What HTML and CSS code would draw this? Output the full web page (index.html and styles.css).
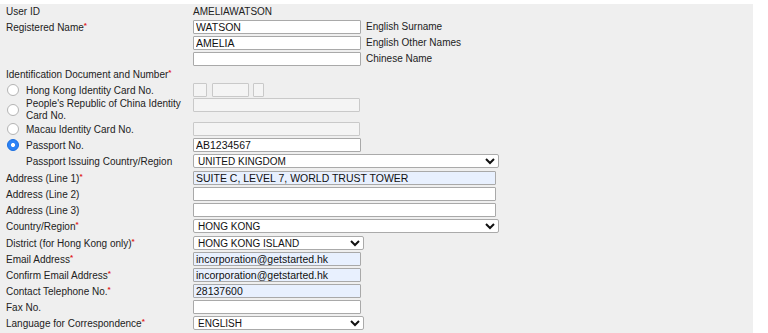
FILE: index.html
```html
<!DOCTYPE html>
<html lang="en">
<head>
    <meta charset="UTF-8">
    <meta name="viewport" content="width=device-width, initial-scale=1.0">
    <title>Applicant Particulars</title>
    <link rel="stylesheet" href="styles.css">
</head>
<body>
    <div class="panel">
        <table class="form">
            <colgroup>
                <col class="col-label">
                <col>
            </colgroup>
            <tr>
                <td class="label">User ID</td>
                <td class="value text">AMELIAWATSON</td>
            </tr>
            <tr>
                <td class="label">Registered Name<span class="req">*</span></td>
                <td class="value"><input class="w168" type="text" value="WATSON"><span class="hint">English Surname</span></td>
            </tr>
            <tr>
                <td class="label"></td>
                <td class="value"><input class="w168" type="text" value="AMELIA"><span class="hint">English Other Names</span></td>
            </tr>
            <tr>
                <td class="label"></td>
                <td class="value"><input class="w168" type="text" value=""><span class="hint">Chinese Name</span></td>
            </tr>
            <tr>
                <td class="label" colspan="2">Identification Document and Number<span class="req">*</span></td>
            </tr>
            <tr>
                <td class="label"><div class="radio-row"><input type="radio" name="doc"><span>Hong Kong Identity Card No.</span></div></td>
                <td class="value">
                    <div class="hkid">
                        <input class="box b1" type="text" disabled>
                        <input class="box b2" type="text" disabled>
                        <input class="box b3" type="text" disabled>
                    </div>
                </td>
            </tr>
            <tr class="tall">
                <td class="label"><div class="radio-row"><input type="radio" name="doc"><span class="two-line">People's Republic of China Identity Card No.</span></div></td>
                <td class="value top"><input class="w167" type="text" disabled></td>
            </tr>
            <tr class="after-tall">
                <td class="label"><div class="radio-row"><input type="radio" name="doc"><span>Macau Identity Card No.</span></div></td>
                <td class="value"><input class="w167" type="text" disabled></td>
            </tr>
            <tr>
                <td class="label"><div class="radio-row"><input type="radio" name="doc" checked><span>Passport No.</span></div></td>
                <td class="value"><input class="w168" type="text" value="AB1234567"></td>
            </tr>
            <tr class="pick">
                <td class="label sub">Passport Issuing Country/Region</td>
                <td class="value"><select class="wide"><option>UNITED KINGDOM</option></select></td>
            </tr>
            <tr>
                <td class="label">Address (Line 1)<span class="req">*</span></td>
                <td class="value"><input class="w303 filled" type="text" value="SUITE C, LEVEL 7, WORLD TRUST TOWER"></td>
            </tr>
            <tr>
                <td class="label">Address (Line 2)</td>
                <td class="value"><input class="w303" type="text" value=""></td>
            </tr>
            <tr>
                <td class="label">Address (Line 3)</td>
                <td class="value"><input class="w303" type="text" value=""></td>
            </tr>
            <tr class="pick">
                <td class="label">Country/Region<span class="req">*</span></td>
                <td class="value"><select class="wide"><option>HONG KONG</option></select></td>
            </tr>
            <tr>
                <td class="label">District (for Hong Kong only)<span class="req">*</span></td>
                <td class="value"><select class="narrow"><option>HONG KONG ISLAND</option></select></td>
            </tr>
            <tr>
                <td class="label">Email Address<span class="req">*</span></td>
                <td class="value"><input class="w168 filled" type="text" value="incorporation@getstarted.hk"></td>
            </tr>
            <tr>
                <td class="label">Confirm Email Address<span class="req">*</span></td>
                <td class="value"><input class="w168 filled" type="text" value="incorporation@getstarted.hk"></td>
            </tr>
            <tr>
                <td class="label">Contact Telephone No.<span class="req">*</span></td>
                <td class="value"><input class="w168 filled" type="text" value="28137600"></td>
            </tr>
            <tr>
                <td class="label">Fax No.</td>
                <td class="value"><input class="w168" type="text" value=""></td>
            </tr>
            <tr>
                <td class="label">Language for Correspondence<span class="req">*</span></td>
                <td class="value"><select class="narrow"><option>ENGLISH</option></select></td>
            </tr>
        </table>
    </div>
</body>
</html>
```

FILE: styles.css
```css
body {
    margin: 0;
    background-color: #ffffff;
    font-family: "Liberation Sans", Arial, sans-serif;
    font-size: 10px;
    color: #222;
}
.panel {
    width: 753px;
    height: 329px;
    margin-top: 4px;
    background-color: #efefef;
    overflow: hidden;
}
.form {
    width: 753px;
    table-layout: fixed;
    border-collapse: collapse;
    border-spacing: 0;
}
.col-label {
    width: 193px;
}
.form td {
    padding: 1px 0;
    line-height: 13px;
    vertical-align: middle;
}
.form td.value {
    line-height: 14px;
    white-space: nowrap;
}
.form td.value.text {
    line-height: 13px;
}
.form .tall td {
    padding: 0;
    line-height: 12px;
}
.form .after-tall td {
    padding-top: 0;
}
.form .pick td {
    padding-bottom: 2px;
}
.label {
    padding-left: 6px !important;
    white-space: nowrap;
}
.label.sub {
    padding-left: 26px !important;
}
.req {
    color: #e0201b;
    font-size: 8px;
    font-weight: bold;
    vertical-align: top;
    line-height: 9px;
}
.radio-row {
    display: flex;
    align-items: center;
}
.radio-row input {
    appearance: none;
    -webkit-appearance: none;
    width: 12px;
    height: 12px;
    margin: 0 7px 0 1px;
    border: 1px solid #b4b4b4;
    border-radius: 50%;
    background: #fff;
    flex-shrink: 0;
}
.radio-row input:checked {
    border-color: #1b6fe0;
    background: radial-gradient(circle, #ffffff 0 1.6px, #2b82f6 2.4px);
}
.two-line {
    white-space: normal;
    width: 158px;
    line-height: 12px;
}
.value.top {
    vertical-align: top;
}

/* text boxes */
input[type="text"] {
    box-sizing: border-box;
    height: 14px;
    margin: 0;
    padding: 0 2px;
    border: 1px solid #a9a9a9;
    border-radius: 1px;
    background-color: #fff;
    font-family: "Liberation Sans", Arial, sans-serif;
    font-size: 10.5px;
    color: #111;
    vertical-align: top;
}
input[type="text"]:disabled {
    background-color: #f4f4f4;
    border-color: #c9c9c9;
}
input.filled {
    background-color: #e8f0fe;
}
.w168 { width: 168px; }
.w167 { width: 167px; }
.w303 { width: 303px; }
.hint {
    margin-left: 5px;
    vertical-align: top;
}
.hkid {
    display: flex;
    gap: 4px;
}
.box.b1 { width: 14px; }
.box.b2 { width: 37px; margin-left: 1px; }
.box.b3 { width: 11px; }

/* drop-downs */
select {
    box-sizing: border-box;
    height: 14px;
    margin: 0;
    padding: 0;
    border: 1px solid #aaa;
    border-radius: 2px;
    background-color: #fff;
    font-family: "Liberation Sans", Arial, sans-serif;
    font-size: 10px;
    color: #111;
    vertical-align: top;
}
select.wide { width: 306px; }
select.narrow { width: 171px; }
```
